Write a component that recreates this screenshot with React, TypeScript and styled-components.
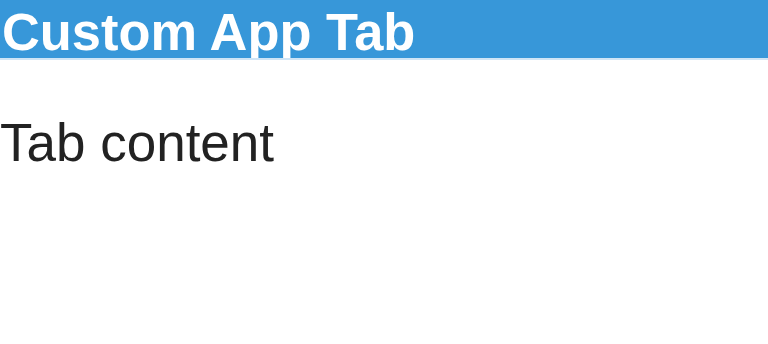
import React from "react";
import styled, { createGlobalStyle } from "styled-components";

const Global = createGlobalStyle`
  html, body { margin: 0; padding: 0; background: #ffffff; }
  body { font-family: "Liberation Sans", Arial, sans-serif; }
`;

const Header = styled.h1`
  margin: 0;
  height: 58px;
  padding: 0 0 0 2px;
  background: #3797d9;
  border-bottom: 2px solid #cfe5f6;
  color: #ffffff;
  font-size: 52.4px;
  font-weight: bold;
  line-height: 64px;
  white-space: nowrap;
  overflow: hidden;
`;

const Content = styled.div`
  padding: 52px 0 0 0;
  color: #222222;
  font-size: 53px;
  line-height: 62px;
`;

export default function App() {
  return (
    <>
      <Global />
      <Header>Custom App Tab</Header>
      <Content>Tab content</Content>
    </>
  );
}
